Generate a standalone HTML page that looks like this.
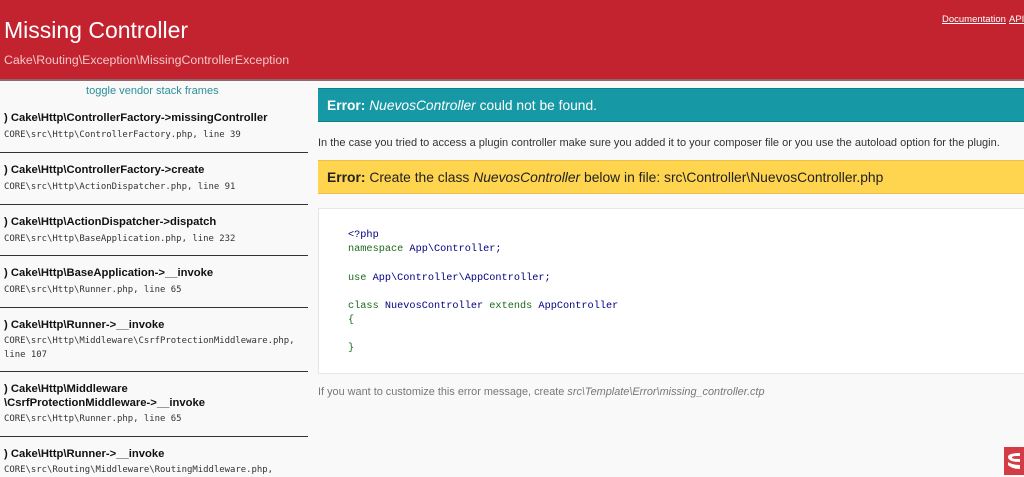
<!DOCTYPE html>
<html><head><meta charset="utf-8"><style>
html,body{margin:0;padding:0;width:1024px;height:475px;overflow:hidden;background:#f9f9f9;font-family:"Liberation Sans",Arial,sans-serif;color:#222}
.a{position:absolute;white-space:nowrap}
.t{left:4px;font-weight:bold;font-size:11.25px;color:#111;line-height:14px;margin-top:1px}
.m{left:4px;font-family:"DejaVu Sans Mono",monospace;font-size:8.95px;color:#333;line-height:14px;margin-top:1px}
.r{position:absolute;left:0;width:308px;height:1px;background:#333}
.c{left:348px;font-family:"Liberation Mono",monospace;font-size:10.24px;line-height:14px;color:#000080}
.g{color:#1a6b1a}
</style></head><body>
<div class="a" style="left:0;top:0;width:1024px;height:79px;background:#c3222f"></div>
<div class="a" style="left:0;top:79px;width:1024px;height:2px;background:#8c6a6e"></div>
<div class="a" style="left:4px;top:15px;font-size:23px;line-height:30px;color:#fff">Missing Controller</div>
<div class="a" style="left:4px;top:52px;font-size:12.33px;line-height:16px;color:#f5c6c9">Cake\Routing\Exception\MissingControllerException</div>
<div class="a" style="left:942px;top:13px;font-size:9.5px;line-height:13px;color:#fff;text-decoration:underline">Documentation</div>
<div class="a" style="left:1009px;top:13px;font-size:9.5px;line-height:13px;color:#fff;text-decoration:underline">API</div>

<div class="a" style="left:86px;top:84px;font-size:11.05px;line-height:14px;color:#2a8f99">toggle vendor stack frames</div>

<div class="a t" style="top:110px">) Cake\Http\ControllerFactory-&gt;missingController</div>
<div class="a m" style="top:127px">CORE\src\Http\ControllerFactory.php, line 39</div>
<div class="r" style="top:152px"></div>
<div class="a t" style="top:162px">) Cake\Http\ControllerFactory-&gt;create</div>
<div class="a m" style="top:179px">CORE\src\Http\ActionDispatcher.php, line 91</div>
<div class="r" style="top:204px"></div>
<div class="a t" style="top:214px">) Cake\Http\ActionDispatcher-&gt;dispatch</div>
<div class="a m" style="top:231px">CORE\src\Http\BaseApplication.php, line 232</div>
<div class="r" style="top:255px"></div>
<div class="a t" style="top:265px">) Cake\Http\BaseApplication-&gt;__invoke</div>
<div class="a m" style="top:282px">CORE\src\Http\Runner.php, line 65</div>
<div class="r" style="top:307px"></div>
<div class="a t" style="top:317px">) Cake\Http\Runner-&gt;__invoke</div>
<div class="a m" style="top:333px">CORE\src\Http\Middleware\CsrfProtectionMiddleware.php,</div>
<div class="a m" style="top:347px">line 107</div>
<div class="r" style="top:371px"></div>
<div class="a t" style="top:381px">) Cake\Http\Middleware</div>
<div class="a t" style="top:395px">\CsrfProtectionMiddleware-&gt;__invoke</div>
<div class="a m" style="top:411px">CORE\src\Http\Runner.php, line 65</div>
<div class="r" style="top:436px"></div>
<div class="a t" style="top:446px">) Cake\Http\Runner-&gt;__invoke</div>
<div class="a m" style="top:462px">CORE\src\Routing\Middleware\RoutingMiddleware.php,</div>

<div class="a" style="left:318px;top:88px;width:706px;height:34px;background:#1798a5;border-top:1px solid #0f7f8b;border-bottom:1px solid #0f7f8b;box-sizing:border-box"></div>
<div class="a" style="left:327px;top:97px;font-size:13.8px;line-height:18px;color:#fff"><b>Error:</b> <i>NuevosController</i> could not be found.</div>
<div class="a" style="left:318px;top:136px;font-size:11px;line-height:14px;color:#333">In the case you tried to access a plugin controller make sure you added it to your composer file or you use the autoload option for the plugin.</div>
<div class="a" style="left:318px;top:160px;width:706px;height:34px;background:#ffd54f;border-top:1px solid #ecc04a;border-bottom:1px solid #ecc04a;box-sizing:border-box"></div>
<div class="a" style="left:327px;top:168px;font-size:13.85px;line-height:18px;color:#222"><b>Error:</b> Create the class <i>NuevosController</i> below in file: src\Controller\NuevosController.php</div>

<div class="a" style="left:318px;top:208px;width:710px;height:166px;background:#fff;border:1px solid #e6e6e6;box-sizing:border-box"></div>
<div class="a c" style="top:228px">&lt;?php</div>
<div class="a c" style="top:242px"><span class="g">namespace</span> App\Controller;</div>
<div class="a c" style="top:271px"><span class="g">use</span> App\Controller\AppController;</div>
<div class="a c" style="top:299px"><span class="g">class</span> NuevosController <span class="g">extends</span> AppController</div>
<div class="a c g" style="top:313px">{</div>
<div class="a c g" style="top:341px">}</div>

<div class="a" style="left:318px;top:385px;font-size:10.9px;line-height:14px;color:#777">If you want to customize this error message, create <i>src\Template\Error\missing_controller.ctp</i></div>

<svg class="a" style="left:1004px;top:447px" width="20" height="28" viewBox="0 0 20 28">
<rect width="20" height="28" fill="#d33c44"/>
<path d="M4 10 C4 7 9 6 16 6 L16 9 C11 9 8 9 8 10.5 C8 12 12 12 16 12 L16 15 C9 15 4 13.5 4 10Z" fill="#fff"/>
<path d="M4 15 C7 17 11 18 16 18 L16 22 C10 22 6 20 4 18Z" fill="#fff"/>
</svg>
</body></html>
